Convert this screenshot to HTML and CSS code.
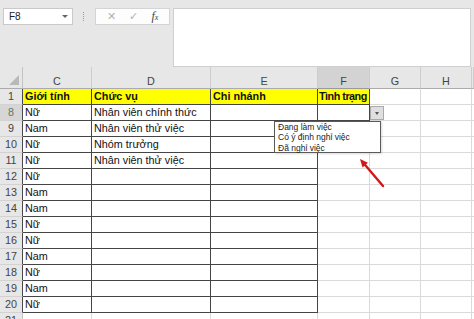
FILE: index.html
```html
<!DOCTYPE html>
<html lang="vi">
<head>
    <meta charset="UTF-8">
    <meta name="viewport" content="width=device-width, initial-scale=1.0">
    <title>Danh sách nhân viên</title>
    <link rel="stylesheet" href="styles.css">
</head>
<body>
    <div class="toolbar">
        <div class="name-box">
            <span>F8</span>
            <span class="caret"></span>
        </div>
        <div class="grip"></div>
        <div class="fx-buttons">
            <span class="btn-cancel">&#x2715;</span>
            <span class="btn-ok">&#x2713;</span>
            <span class="btn-fx"><i>f</i><small>x</small></span>
        </div>
        <div class="formula-input"></div>
    </div>

    <div class="sheet">
        <div class="row head">
            <div class="corner">
                <svg width="11" height="11" viewBox="0 0 11 11"><polygon points="10,0 10,10 0,10" fill="#b9b9b9"/></svg>
            </div>
            <div class="col-h">C</div>
            <div class="col-h">D</div>
            <div class="col-h">E</div>
            <div class="col-h selected">F</div>
            <div class="col-h">G</div>
            <div class="col-h">H</div>
            <div class="col-h"></div>
        </div>

        <div class="row">
            <div class="rh edge">1</div>
            <div class="cell t title">Giới tính</div>
            <div class="cell t title">Chức vụ</div>
            <div class="cell t title">Chi nhánh</div>
            <div class="cell t title tight">Tình trạng</div>
            <div class="cell"></div>
            <div class="cell"></div>
            <div class="cell"></div>
        </div>
        <div class="row">
            <div class="rh edge active">8</div>
            <div class="cell t">Nữ</div>
            <div class="cell t">Nhân viên chính thức</div>
            <div class="cell t"></div>
            <div class="cell t current">
                <span class="drop-btn"></span>
                <div class="drop-list">
                    <div>Đang làm việc</div>
                    <div>Có ý định nghỉ việc</div>
                    <div>Đã nghỉ việc</div>
                </div>
            </div>
            <div class="cell"></div>
            <div class="cell"></div>
            <div class="cell"></div>
        </div>
        <div class="row">
            <div class="rh edge">9</div>
            <div class="cell t">Nam</div>
            <div class="cell t">Nhân viên thử việc</div>
            <div class="cell t"></div>
            <div class="cell"></div>
            <div class="cell"></div>
            <div class="cell"></div>
            <div class="cell"></div>
        </div>
        <div class="row">
            <div class="rh edge">10</div>
            <div class="cell t">Nữ</div>
            <div class="cell t">Nhóm trưởng</div>
            <div class="cell t"></div>
            <div class="cell"></div>
            <div class="cell"></div>
            <div class="cell"></div>
            <div class="cell"></div>
        </div>
        <div class="row">
            <div class="rh edge">11</div>
            <div class="cell t">Nữ</div>
            <div class="cell t">Nhân viên thử việc</div>
            <div class="cell t"></div>
            <div class="cell"></div>
            <div class="cell"></div>
            <div class="cell"></div>
            <div class="cell"></div>
        </div>
        <div class="row">
            <div class="rh edge">12</div>
            <div class="cell t">Nữ</div>
            <div class="cell t"></div>
            <div class="cell t"></div>
            <div class="cell"></div>
            <div class="cell"></div>
            <div class="cell"></div>
            <div class="cell"></div>
        </div>
        <div class="row">
            <div class="rh edge">13</div>
            <div class="cell t">Nam</div>
            <div class="cell t"></div>
            <div class="cell t"></div>
            <div class="cell"></div>
            <div class="cell"></div>
            <div class="cell"></div>
            <div class="cell"></div>
        </div>
        <div class="row">
            <div class="rh edge">14</div>
            <div class="cell t">Nam</div>
            <div class="cell t"></div>
            <div class="cell t"></div>
            <div class="cell"></div>
            <div class="cell"></div>
            <div class="cell"></div>
            <div class="cell"></div>
        </div>
        <div class="row">
            <div class="rh edge">15</div>
            <div class="cell t">Nữ</div>
            <div class="cell t"></div>
            <div class="cell t"></div>
            <div class="cell"></div>
            <div class="cell"></div>
            <div class="cell"></div>
            <div class="cell"></div>
        </div>
        <div class="row">
            <div class="rh edge">16</div>
            <div class="cell t">Nữ</div>
            <div class="cell t"></div>
            <div class="cell t"></div>
            <div class="cell"></div>
            <div class="cell"></div>
            <div class="cell"></div>
            <div class="cell"></div>
        </div>
        <div class="row">
            <div class="rh edge">17</div>
            <div class="cell t">Nam</div>
            <div class="cell t"></div>
            <div class="cell t"></div>
            <div class="cell"></div>
            <div class="cell"></div>
            <div class="cell"></div>
            <div class="cell"></div>
        </div>
        <div class="row">
            <div class="rh edge">18</div>
            <div class="cell t">Nữ</div>
            <div class="cell t"></div>
            <div class="cell t"></div>
            <div class="cell"></div>
            <div class="cell"></div>
            <div class="cell"></div>
            <div class="cell"></div>
        </div>
        <div class="row">
            <div class="rh edge">19</div>
            <div class="cell t">Nam</div>
            <div class="cell t"></div>
            <div class="cell t"></div>
            <div class="cell"></div>
            <div class="cell"></div>
            <div class="cell"></div>
            <div class="cell"></div>
        </div>
        <div class="row">
            <div class="rh edge">20</div>
            <div class="cell t">Nữ</div>
            <div class="cell t"></div>
            <div class="cell t"></div>
            <div class="cell"></div>
            <div class="cell"></div>
            <div class="cell"></div>
            <div class="cell"></div>
        </div>
        <div class="row">
            <div class="rh">21</div>
            <div class="cell"></div>
            <div class="cell"></div>
            <div class="cell"></div>
            <div class="cell"></div>
            <div class="cell"></div>
            <div class="cell"></div>
            <div class="cell"></div>
        </div>

        <!-- red pointer to the list -->
        <svg class="pointer" width="36" height="36" viewBox="0 0 36 36">
            <line x1="28" y1="31" x2="9.5" y2="9.3" stroke="#d4161b" stroke-width="2.4" stroke-linecap="round"/>
            <polygon points="5,4 12.9,7.8 7.5,12.4" fill="#d4161b"/>
        </svg>
    </div>
</body>
</html>
```

FILE: styles.css
```css
* {
    margin: 0;
    padding: 0;
    box-sizing: border-box;
}
body {
    font-family: "Liberation Sans", Arial, sans-serif;
    background-color: #e7e7e7;
    overflow: hidden;
}
.toolbar {
    height: 67px;
    display: flex;
    align-items: flex-start;
    padding: 8px 3px 0 3px;
}
.name-box {
    width: 70px;
    height: 17px;
    background-color: white;
    border: 1px solid #c9c9c9;
    display: flex;
    justify-content: space-between;
    align-items: center;
    padding: 0 4px 0 5px;
    font-size: 10px;
    color: #222;
}
.caret {
    width: 0;
    height: 0;
    border-left: 3px solid transparent;
    border-right: 3px solid transparent;
    border-top: 3px solid #666;
}
.grip {
    width: 2px;
    height: 9px;
    margin: 4px 10px 0 10px;
    border-left: 1px dotted #9a9a9a;
}
.fx-buttons {
    width: 75px;
    height: 17px;
    background-color: #fdfdfd;
    border: 1px solid #d4d4d4;
    display: flex;
    align-items: center;
    justify-content: space-around;
    padding: 0 4px;
    color: #b3b3b3;
    font-size: 11px;
}
.btn-fx {
    color: #444;
    font-family: "Liberation Serif", serif;
    font-size: 12px;
}
.btn-fx small {
    font-size: 8px;
    font-style: italic;
}
.formula-input {
    flex: 1;
    height: 59px;
    margin-left: 3px;
    background-color: white;
    border: 1px solid #cfcfcf;
}
.sheet {
    position: relative;
    background-color: white;
}
.row {
    display: grid;
    grid-template-columns: 23px 69px 119px 107px 52px 51px 51px 1fr;
    height: 16px;
}
.row.head {
    height: 22px;
    background-color: #e7e7e7;
}
.corner {
    border-right: 1px solid #c3c3c3;
    border-bottom: 1px solid #ababab;
    display: flex;
    justify-content: flex-end;
    align-items: flex-end;
    padding: 0 2px 2px 0;
}
.col-h {
    border-right: 1px solid #cdcdcd;
    border-bottom: 1px solid #ababab;
    text-align: center;
    font-size: 10.8px;
    line-height: 13px;
    padding-top: 8px;
    color: #444;
}
.col-h.selected {
    background-color: #d3d3d3;
    border-bottom-color: #9a9a9a;
}
.rh {
    background-color: #e7e7e7;
    border-right: 1px solid #c3c3c3;
    border-bottom: 1px solid #d2d2d2;
    text-align: center;
    font-size: 10.8px;
    line-height: 15px;
    color: #444;
}
.rh.edge {
    border-right-color: #4a4a4a;
}
.rh.active {
    background-color: #d6d6d6;
    color: #5f7a68;
}
.cell {
    border-right: 1px solid #dadada;
    border-bottom: 1px solid #dadada;
    font-size: 10.8px;
    line-height: 15px;
    padding-left: 2px;
    white-space: nowrap;
    color: #111;
}
.cell.t {
    border-right-color: #454545;
    border-bottom-color: #454545;
}
.cell.title {
    background-color: #ffff00;
    font-weight: bold;
}
.cell.tight {
    letter-spacing: -0.5px;
    padding-left: 1px;
}
.cell.current {
    position: relative;
}
.drop-btn {
    position: absolute;
    left: 52px;
    top: 1px;
    width: 14px;
    height: 14px;
    background-color: #dfdfdf;
    border: 1px solid #aaaaaa;
}
.drop-btn::after {
    content: "";
    position: absolute;
    left: 4px;
    top: 5px;
    border-left: 2.5px solid transparent;
    border-right: 2.5px solid transparent;
    border-top: 3px solid #555;
}
.drop-list {
    position: absolute;
    left: -44px;
    top: 16px;
    width: 107px;
    height: 32px;
    background-color: white;
    border: 1px solid #5a5a5a;
    box-shadow: 1px 1px 2px rgba(0, 0, 0, 0.15);
    padding-left: 3px;
    font-size: 8.5px;
    line-height: 10.3px;
    color: #222;
    z-index: 5;
}
.pointer {
    position: absolute;
    left: 355px;
    top: 88px;
}
```
